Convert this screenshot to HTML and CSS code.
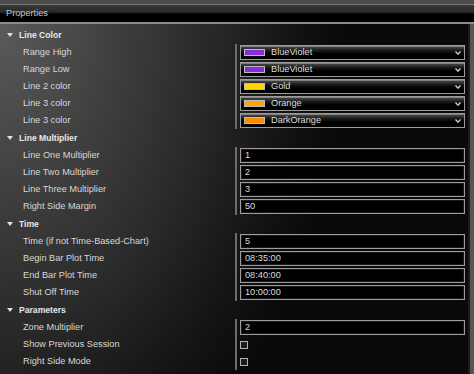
FILE: index.html
```html
<!DOCTYPE html>
<html lang="en">
<head>
    <meta charset="UTF-8">
    <meta name="viewport" content="width=device-width, initial-scale=1.0">
    <title>Properties</title>
    <link rel="stylesheet" href="styles.css">
</head>
<body>

<div class="window">
    <div class="top-strip"></div>
    <div class="title-bar">Properties</div>

    <div class="content">
        <div class="grid">

            <div class="group-row"><span class="arrow"></span>Line Color</div>
            <div class="row">
                <div class="label">Range High</div>
                <div class="value">
                    <div class="dropdown"><span class="swatch blueviolet"></span>BlueViolet<svg class="chevron" viewBox="0 0 6 4"><path d="M0.5 0.5 L3 3.2 L5.5 0.5"/></svg></div>
                </div>
            </div>
            <div class="row">
                <div class="label">Range Low</div>
                <div class="value">
                    <div class="dropdown"><span class="swatch blueviolet"></span>BlueViolet<svg class="chevron" viewBox="0 0 6 4"><path d="M0.5 0.5 L3 3.2 L5.5 0.5"/></svg></div>
                </div>
            </div>
            <div class="row">
                <div class="label">Line 2 color</div>
                <div class="value">
                    <div class="dropdown"><span class="swatch gold"></span>Gold<svg class="chevron" viewBox="0 0 6 4"><path d="M0.5 0.5 L3 3.2 L5.5 0.5"/></svg></div>
                </div>
            </div>
            <div class="row">
                <div class="label">Line 3 color</div>
                <div class="value">
                    <div class="dropdown"><span class="swatch orange"></span>Orange<svg class="chevron" viewBox="0 0 6 4"><path d="M0.5 0.5 L3 3.2 L5.5 0.5"/></svg></div>
                </div>
            </div>
            <div class="row">
                <div class="label">Line 3 color</div>
                <div class="value">
                    <div class="dropdown"><span class="swatch darkorange"></span>DarkOrange<svg class="chevron" viewBox="0 0 6 4"><path d="M0.5 0.5 L3 3.2 L5.5 0.5"/></svg></div>
                </div>
            </div>

            <div class="group-row"><span class="arrow"></span>Line Multiplier</div>
            <div class="row">
                <div class="label">Line One Multiplier</div>
                <div class="value"><div class="field">1</div></div>
            </div>
            <div class="row">
                <div class="label">Line Two Multiplier</div>
                <div class="value"><div class="field">2</div></div>
            </div>
            <div class="row">
                <div class="label">Line Three Multiplier</div>
                <div class="value"><div class="field">3</div></div>
            </div>
            <div class="row">
                <div class="label">Right Side Margin</div>
                <div class="value"><div class="field">50</div></div>
            </div>

            <div class="group-row"><span class="arrow"></span>Time</div>
            <div class="row">
                <div class="label">Time (if not Time-Based-Chart)</div>
                <div class="value"><div class="field">5</div></div>
            </div>
            <div class="row">
                <div class="label">Begin Bar Plot Time</div>
                <div class="value"><div class="field">08:35:00</div></div>
            </div>
            <div class="row">
                <div class="label">End Bar Plot Time</div>
                <div class="value"><div class="field">08:40:00</div></div>
            </div>
            <div class="row">
                <div class="label">Shut Off Time</div>
                <div class="value"><div class="field">10:00:00</div></div>
            </div>

            <div class="group-row"><span class="arrow"></span>Parameters</div>
            <div class="row">
                <div class="label">Zone Multiplier</div>
                <div class="value"><div class="field">2</div></div>
            </div>
            <div class="row">
                <div class="label">Show Previous Session</div>
                <div class="value"><span class="checkbox"></span></div>
            </div>
            <div class="row">
                <div class="label">Right Side Mode</div>
                <div class="value"><span class="checkbox"></span></div>
            </div>

        </div>
        <div class="scroll-edge"></div>
    </div>
</div>

</body>
</html>
```

FILE: styles.css
```css
body {
    margin: 0;
    width: 474px;
    height: 374px;
    overflow: hidden;
    background: #0a0a0a;
    font-family: 'Liberation Sans', Arial, sans-serif;
    font-size: 9.2px;
    color: #d8d8d8;
}

.window {
    width: 474px;
    height: 374px;
    display: flex;
    flex-direction: column;
}

.top-strip {
    height: 4px;
    background: #4c4c4c;
    border-bottom: 1px solid #7a7a7a;
}

.title-bar {
    height: 17px;
    line-height: 17px;
    padding-left: 6px;
    color: #c8c8c8;
    background: linear-gradient(180deg, #3a3a3a 0%, #2a2a2a 40%, #000 55%, #000 100%);
    border-bottom: 2px solid #8c8c8c;
}

.content {
    flex: 1;
    display: flex;
    background: radial-gradient(ellipse 340px 500px at 0 0, #5a5a5a 0%, #3e3e3e 35%, #2a2a2a 60%, #141414 85%, #0a0a0a 100%);
}

.grid {
    flex: 1;
    padding-top: 2px;
    display: flex;
    flex-direction: column;
}

.group-row {
    height: 18px;
    line-height: 18px;
    padding-left: 7px;
    font-size: 8.6px;
    font-weight: bold;
    color: #e8e8e8;
    display: flex;
    align-items: center;
}

.arrow {
    width: 0;
    height: 0;
    border-left: 3px solid transparent;
    border-right: 3px solid transparent;
    border-top: 4px solid #e0e0e0;
    margin-right: 6px;
}

.row {
    height: 17px;
    display: flex;
}

.label {
    width: 212px;
    padding-left: 23px;
    line-height: 17px;
    white-space: nowrap;
}

.value {
    flex: 1;
    border-left: 2px solid #6c6c6c;
    padding: 1px 3px 1px 3px;
    display: flex;
    align-items: center;
}

.field,
.dropdown {
    box-sizing: border-box;
    width: 225px;
    height: 15px;
    line-height: 13px;
    border: 1px solid #9c9c9c;
    background: #000;
    box-shadow: inset 0 0 0 1px #1a1a1a;
    color: #dcdcdc;
    padding-left: 4px;
}

.dropdown {
    display: flex;
    align-items: center;
    padding-left: 3px;
    background: linear-gradient(180deg, #505050 0%, #1a1a1a 35%, #000 60%, #000 100%);
    box-shadow: inset 0 1px 0 #808080;
}

.swatch {
    width: 19px;
    height: 5px;
    border: 1px solid #bbb;
    margin-right: 6px;
}

.blueviolet { background: #8a2be2; }
.gold { background: #ffd700; }
.orange { background: #ffa500; }
.darkorange { background: #ff8c00; }

.chevron {
    width: 6px;
    height: 4px;
    margin-left: auto;
    margin-right: 3px;
    fill: none;
    stroke: #d0d0d0;
    stroke-width: 1.3;
}

.checkbox {
    box-sizing: border-box;
    width: 8px;
    height: 8px;
    border: 1px solid #b0b0b0;
    background: #1c1c1c;
}

.scroll-edge {
    width: 6px;
    border-left: 2px solid #1c1c1c;
    background: #555;
}
```
